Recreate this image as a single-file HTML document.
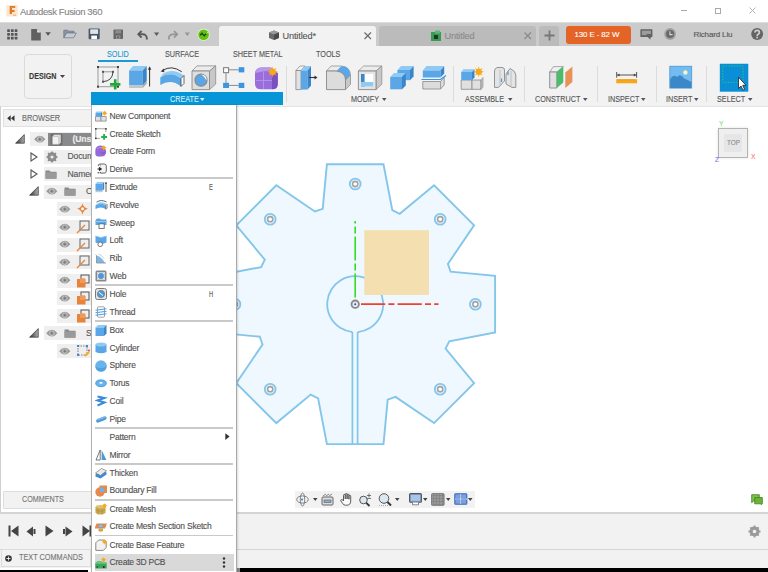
<!DOCTYPE html>
<html><head><meta charset="utf-8">
<style>
*{margin:0;padding:0;box-sizing:border-box}
html,body{width:768px;height:572px;overflow:hidden;background:#fff;font-family:"Liberation Sans",sans-serif;color:#555}
.a{position:absolute;display:block}
.t{position:absolute;white-space:nowrap;line-height:1;-webkit-text-stroke:0.12px currentColor}
</style></head><body>

<svg class="a" style="left:0;top:0" width="768" height="572" viewBox="0 0 768 572"><polygon points="326.9,164.3 383.5,164.3 392.3,210.1 399.7,213.8 434.1,185.3 474.1,225.3 447.9,263.9 450.6,271.7 495.1,275.9 495.1,332.5 449.3,341.3 445.6,348.7 474.1,383.1 434.1,423.1 395.5,396.9 387.7,399.6 383.5,444.1 326.9,444.1 318.1,398.3 310.7,394.6 276.3,423.1 236.3,383.1 262.5,344.5 259.8,336.7 215.3,332.5 215.3,275.9 261.1,267.1 264.8,259.7 236.3,225.3 276.3,185.3 314.9,211.5 322.7,208.8" fill="#eff7ff" stroke="#84c6ea" stroke-width="1.9" stroke-linejoin="miter"/><path d="M 352.6 332.1 A 28 28 0 1 1 357.8 332.1" fill="none" stroke="#84c6ea" stroke-width="1.8"/><path d="M 352.4 332.0 L 352.4 444.2 M 357.6 332.0 L 357.6 444.2" fill="none" stroke="#84c6ea" stroke-width="1.7"/><circle cx="355.2" cy="184.0" r="5.4" fill="#eaf4fb" stroke="#84c6ea" stroke-width="1.8"/><circle cx="355.2" cy="184.0" r="2.6" fill="#fff" stroke="#a4a4a4" stroke-width="1.6"/><circle cx="440.2" cy="219.2" r="5.4" fill="#eaf4fb" stroke="#84c6ea" stroke-width="1.8"/><circle cx="440.2" cy="219.2" r="2.6" fill="#fff" stroke="#a4a4a4" stroke-width="1.6"/><circle cx="475.4" cy="304.2" r="5.4" fill="#eaf4fb" stroke="#84c6ea" stroke-width="1.8"/><circle cx="475.4" cy="304.2" r="2.6" fill="#fff" stroke="#a4a4a4" stroke-width="1.6"/><circle cx="440.2" cy="389.2" r="5.4" fill="#eaf4fb" stroke="#84c6ea" stroke-width="1.8"/><circle cx="440.2" cy="389.2" r="2.6" fill="#fff" stroke="#a4a4a4" stroke-width="1.6"/><circle cx="270.2" cy="389.2" r="5.4" fill="#eaf4fb" stroke="#84c6ea" stroke-width="1.8"/><circle cx="270.2" cy="389.2" r="2.6" fill="#fff" stroke="#a4a4a4" stroke-width="1.6"/><circle cx="235.0" cy="304.2" r="5.4" fill="#eaf4fb" stroke="#84c6ea" stroke-width="1.8"/><circle cx="235.0" cy="304.2" r="2.6" fill="#fff" stroke="#a4a4a4" stroke-width="1.6"/><circle cx="270.2" cy="219.2" r="5.4" fill="#eaf4fb" stroke="#84c6ea" stroke-width="1.8"/><circle cx="270.2" cy="219.2" r="2.6" fill="#fff" stroke="#a4a4a4" stroke-width="1.6"/><rect x="364.3" y="230.2" width="64.7" height="64.8" fill="#f3dfb0"/><path d="M 355.2 297.5 L 355.2 221" stroke="#33dd22" stroke-width="1.6" stroke-dasharray="24 3 7 3"/><path d="M 361 304.2 L 438.5 304.2" stroke="#f04030" stroke-width="1.8" stroke-dasharray="24.2 3.2 6 3.2"/><circle cx="355.2" cy="304.2" r="3.7" fill="#e8e8e8" stroke="#888" stroke-width="1.8"/><circle cx="355.2" cy="304.2" r="1" fill="#3355cc"/></svg>
<div class="a" style="left:0px;top:0px;width:768px;height:23px;background:#fff;"></div>
<svg class="a" style="left:6px;top:5px" width="13" height="13" viewBox="0 0 13 13"><rect x="0.4" y="0" width="11.3" height="11.5" fill="#fce6d0"/><path d="M3.7 1H9.2V3.1H6V4.9H8.6V6.9H6V9.1H3.7z" fill="#e07a22"/><path d="M4.5 2H8V2.6H5.2z" fill="#f0a050"/><rect x="7" y="9.6" width="3" height="1.2" fill="#f4b070"/></svg>
<div class="t" style="left:20.00px;top:6.86px;font-size:9.5px;color:#858585;font-weight:normal;letter-spacing:-0.38px;">Autodesk Fusion 360</div>
<div class="a" style="left:681px;top:9.9px;width:6px;height:1px;background:#aaaaaa;"></div>
<div class="a" style="left:714.5px;top:8px;width:6.5px;height:6px;border:1px solid #aaaaaa"></div>
<svg class="a" style="left:748.5px;top:7.3px" width="7" height="7" viewBox="0 0 7 7"><path d="M0.5 0.5L6.5 6.5M6.5 0.5L0.5 6.5" stroke="#aaaaaa" stroke-width="0.9"/></svg>
<div class="a" style="left:0px;top:23px;width:768px;height:22.5px;background:#cbcbcb;"></div>
<div class="a" style="left:0px;top:22.3px;width:768px;height:1.2px;background:#dcdcdc;"></div>
<svg class="a" style="left:6.9px;top:28.9px" width="11" height="11" viewBox="0 0 11 11"><rect x="0.20" y="0.20" width="2.7" height="2.7" rx="0.5" fill="#555"/><rect x="0.20" y="3.95" width="2.7" height="2.7" rx="0.5" fill="#555"/><rect x="0.20" y="7.70" width="2.7" height="2.7" rx="0.5" fill="#555"/><rect x="3.95" y="0.20" width="2.7" height="2.7" rx="0.5" fill="#555"/><rect x="3.95" y="3.95" width="2.7" height="2.7" rx="0.5" fill="#555"/><rect x="3.95" y="7.70" width="2.7" height="2.7" rx="0.5" fill="#555"/><rect x="7.70" y="0.20" width="2.7" height="2.7" rx="0.5" fill="#555"/><rect x="7.70" y="3.95" width="2.7" height="2.7" rx="0.5" fill="#555"/><rect x="7.70" y="7.70" width="2.7" height="2.7" rx="0.5" fill="#555"/></svg>
<svg class="a" style="left:30px;top:28.5px" width="22" height="12" viewBox="0 0 22 12"><path d="M1.2 0h6l3.6 3.6V11.4H1.2z" fill="#606060"/><path d="M7.2 0v3.6h3.6z" fill="#e8e8e8"/><path d="M15.3 3.3h5.5l-2.75 3.5z" fill="#555"/></svg>
<svg class="a" style="left:62.5px;top:28.8px" width="14" height="10" viewBox="0 0 14 10"><path d="M0.8 1.2h4l1 1h5.2v2H3.5L0.8 8.8z" fill="#8a96a4" stroke="#6a7684" stroke-width="0.7"/><path d="M0.8 8.8l2.7-4.8h9.8l-2.7 4.8z" fill="#c4ccd6" stroke="#6a7684" stroke-width="0.7"/></svg>
<svg class="a" style="left:87.7px;top:28.3px" width="12.3" height="11.8" viewBox="0 0 12.3 11.8"><rect x="0.6" y="0.6" width="11.1" height="10.6" rx="1" fill="#46566a"/><rect x="2.2" y="1.3" width="7.9" height="4.6" fill="#dfe3e8"/><rect x="3.3" y="7.6" width="5.7" height="3.6" fill="#fff"/></svg>
<svg class="a" style="left:113.1px;top:29.3px" width="10.5" height="10.5" viewBox="0 0 10.5 10.5"><path d="M0.5 1.2l0.7-0.7h8.3l0.5 0.5v8.5l-0.5 0.5H0.5z" fill="#676767"/><rect x="2.3" y="1.2" width="5.8" height="3.2" fill="#8c8c8c"/><rect x="3" y="6.5" width="4.3" height="3.2" fill="#9a9a9a"/><rect x="4" y="7.3" width="2.3" height="1.8" fill="#676767"/></svg>
<svg class="a" style="left:136.5px;top:29.5px" width="24" height="10" viewBox="0 0 24 10"><path d="M4.6 1L1.3 4.3L4.6 7.6" fill="none" stroke="#5a5a5a" stroke-width="1.9"/><path d="M2 4.3h3.8a4 4 0 0 1 4 4v1.2" fill="none" stroke="#5a5a5a" stroke-width="1.9"/><path d="M17 2.5h5.2l-2.6 3.5z" fill="#5a5a5a"/></svg>
<svg class="a" style="left:167.5px;top:29.5px" width="24" height="10" viewBox="0 0 24 10"><path d="M6 1L9.3 4.3L6 7.6" fill="none" stroke="#959595" stroke-width="1.7"/><path d="M8.6 4.3h-3.8a4 4 0 0 0 -4 4v1.2" fill="none" stroke="#959595" stroke-width="1.7"/><path d="M16.7 2.5h5.2l-2.6 3.5z" fill="#959595"/></svg>
<svg class="a" style="left:196.5px;top:27.5px" width="14" height="14" viewBox="0 0 14 14"><circle cx="6.6" cy="6.7" r="6.2" fill="#dff0d0"/><circle cx="6.6" cy="6.7" r="5.3" fill="#62c010"/><path d="M3.2 7.2l1.8-2 2.2 2.6 2.2-2.2" fill="none" stroke="#1e3a12" stroke-width="1.3"/><path d="M9.4 5.6l2-2" stroke="#b8e890" stroke-width="0.9"/></svg>
<div class="a" style="left:219px;top:25.5px;width:157px;height:20px;background:#f2f2f2;border-radius:3px 3px 0 0"></div>
<svg class="a" style="left:268px;top:28.5px" width="12" height="12" viewBox="0 0 12 12"><path d="M1 3.5L6 1.5L11 3.5V9L6 11L1 9z" fill="#6a6a6a"/><path d="M1 3.5L6 5.5L11 3.5L6 1.5z" fill="#9a9a9a"/><path d="M6 5.5V11L11 9V3.5z" fill="#4a4a4a"/></svg>
<div class="t" style="left:282.50px;top:31.51px;font-size:9.2px;color:#555;font-weight:normal;letter-spacing:-0.15px;">Untitled*</div>
<svg class="a" style="left:364px;top:32px" width="8" height="8" viewBox="0 0 8 8"><path d="M0.5 0.5L7 7M7 0.5L0.5 7" stroke="#666" stroke-width="1.1"/></svg>
<div class="a" style="left:379px;top:25.5px;width:157px;height:20px;background:#bbbbbb;border-radius:3px 3px 0 0"></div>
<svg class="a" style="left:429.5px;top:29.5px" width="12" height="12" viewBox="0 0 12 12"><rect x="1" y="2" width="10" height="9" fill="#3a9a55"/><rect x="4" y="5" width="4" height="4" fill="#1a3a20"/><rect x="5" y="0.5" width="5" height="3" fill="#5aba75"/></svg>
<div class="t" style="left:444.50px;top:31.51px;font-size:9.2px;color:#8a8a8a;font-weight:normal;letter-spacing:-0.15px;">Untitled</div>
<svg class="a" style="left:524px;top:32px" width="8" height="8" viewBox="0 0 8 8"><path d="M0.5 0.5L7 7M7 0.5L0.5 7" stroke="#888" stroke-width="1.1"/></svg>
<div class="a" style="left:539px;top:25.5px;width:20px;height:20px;background:#bbbbbb;border-radius:3px 3px 0 0"></div>
<svg class="a" style="left:543.5px;top:30px" width="11" height="11" viewBox="0 0 11 11"><path d="M5.5 0.5V10.5M0.5 5.5H10.5" stroke="#777" stroke-width="1.8"/></svg>
<div class="a" style="left:566px;top:25.5px;width:65px;height:18.2px;background:#e46327;border-radius:3px"></div>
<div class="t" style="left:574.50px;top:31.14px;font-size:7.9px;color:#fff;font-weight:normal;letter-spacing:-0.1px;">130 E - 82 W</div>
<svg class="a" style="left:639.5px;top:29px" width="13" height="11" viewBox="0 0 13 11"><rect x="0.4" y="0.2" width="12" height="7.8" rx="0.6" fill="#606060"/><rect x="1.8" y="1.6" width="9.2" height="4.6" fill="#9c9c9c"/><rect x="6.5" y="5" width="4.5" height="1.2" fill="#606060"/><path d="M7.5 7.8H11L10.2 10.5z" fill="#606060"/></svg>
<svg class="a" style="left:664px;top:28.1px" width="12.5" height="12.5" viewBox="0 0 12.5 12.5"><circle cx="6.1" cy="6" r="5.9" fill="#a4a4a4"/><circle cx="6.1" cy="6" r="4.6" fill="#8a8a8a"/><circle cx="6.1" cy="6" r="3.8" fill="#676767"/><path d="M5.9 3.3V6.6H8.6" fill="none" stroke="#d8d8d8" stroke-width="1.1"/></svg>
<div class="t" style="left:693.50px;top:31.09px;font-size:8.0px;color:#555;font-weight:normal;letter-spacing:-0.15px;">Richard Liu</div>
<svg class="a" style="left:751px;top:28px" width="12.5" height="12.5" viewBox="0 0 12.5 12.5"><circle cx="6.15" cy="6" r="5.95" fill="#646464"/><path d="M4 4.6Q4 2.3 6.2 2.3Q8.4 2.3 8.4 4.3Q8.4 5.6 7.2 6.2Q6.2 6.7 6.2 7.9" fill="none" stroke="#cfcfcf" stroke-width="1.7"/><rect x="5.35" y="8.7" width="1.7" height="1.6" fill="#cfcfcf"/></svg>
<div class="a" style="left:0px;top:45.5px;width:768px;height:60.5px;background:#f2f2f2;"></div>
<div class="a" style="left:0px;top:105.5px;width:768px;height:1px;background:#e4e4e4;"></div>
<div class="a" style="left:23.5px;top:54px;width:48px;height:44.5px;border:1px solid #dadada;border-radius:4px;background:#f2f2f2"></div>
<div class="t" style="left:29.30px;top:72.45px;font-size:8.3px;color:#3a3a3a;font-weight:bold;letter-spacing:0px;transform:scaleX(0.86);transform-origin:0 0;">DESIGN</div>
<svg class="a" style="left:60px;top:75px" width="6" height="4" viewBox="0 0 6 4"><path d="M0 0h5l-2.5 3z" fill="#444"/></svg>
<div class="t" style="left:107.00px;top:50.25px;font-size:8.5px;color:#1a9ad8;font-weight:normal;letter-spacing:0px;transform:scaleX(0.85);transform-origin:0 0;">SOLID</div>
<div class="a" style="left:98px;top:60.2px;width:40px;height:2px;background:#1a9ad8;"></div>
<div class="t" style="left:165.00px;top:50.25px;font-size:8.5px;color:#555;font-weight:normal;letter-spacing:0px;transform:scaleX(0.85);transform-origin:0 0;">SURFACE</div>
<div class="t" style="left:233.30px;top:50.25px;font-size:8.5px;color:#555;font-weight:normal;letter-spacing:0px;transform:scaleX(0.85);transform-origin:0 0;">SHEET METAL</div>
<div class="t" style="left:316.00px;top:50.25px;font-size:8.5px;color:#555;font-weight:normal;letter-spacing:0px;transform:scaleX(0.85);transform-origin:0 0;">TOOLS</div>
<div class="a" style="left:286px;top:66px;width:1px;height:36px;background:#dcdcdc;"></div>
<div class="a" style="left:452.5px;top:66px;width:1px;height:36px;background:#dcdcdc;"></div>
<div class="a" style="left:524px;top:66px;width:1px;height:36px;background:#dcdcdc;"></div>
<div class="a" style="left:597px;top:66px;width:1px;height:36px;background:#dcdcdc;"></div>
<div class="a" style="left:656px;top:66px;width:1px;height:36px;background:#dcdcdc;"></div>
<div class="a" style="left:706.2px;top:66px;width:1px;height:36px;background:#dcdcdc;"></div>
<div class="a" style="left:91px;top:92.4px;width:191.9px;height:12.6px;background:#0696d7;"></div>
<div class="t" style="left:169.50px;top:95.05px;font-size:8.5px;color:#d6effa;font-weight:normal;letter-spacing:0px;transform:scaleX(0.85);transform-origin:0 0;">CREATE</div>
<svg class="a" style="left:200px;top:98px" width="5" height="3.5" viewBox="0 0 5 3.5"><path d="M0 0h4.5l-2.25 3z" fill="#e6f6fd"/></svg>
<div class="t" style="left:351.00px;top:95.05px;font-size:8.5px;color:#555;font-weight:normal;letter-spacing:0px;transform:scaleX(0.85);transform-origin:0 0;">MODIFY</div>
<svg class="a" style="left:382px;top:98px" width="5" height="3.5" viewBox="0 0 5 3.5"><path d="M0 0h4.5l-2.25 3z" fill="#555"/></svg>
<div class="t" style="left:465.00px;top:95.05px;font-size:8.5px;color:#555;font-weight:normal;letter-spacing:0px;transform:scaleX(0.85);transform-origin:0 0;">ASSEMBLE</div>
<svg class="a" style="left:508px;top:98px" width="5" height="3.5" viewBox="0 0 5 3.5"><path d="M0 0h4.5l-2.25 3z" fill="#555"/></svg>
<div class="t" style="left:535.00px;top:95.05px;font-size:8.5px;color:#555;font-weight:normal;letter-spacing:0px;transform:scaleX(0.85);transform-origin:0 0;">CONSTRUCT</div>
<svg class="a" style="left:582.5px;top:98px" width="5" height="3.5" viewBox="0 0 5 3.5"><path d="M0 0h4.5l-2.25 3z" fill="#555"/></svg>
<div class="t" style="left:607.50px;top:95.05px;font-size:8.5px;color:#555;font-weight:normal;letter-spacing:0px;transform:scaleX(0.85);transform-origin:0 0;">INSPECT</div>
<svg class="a" style="left:641px;top:98px" width="5" height="3.5" viewBox="0 0 5 3.5"><path d="M0 0h4.5l-2.25 3z" fill="#555"/></svg>
<div class="t" style="left:665.50px;top:95.05px;font-size:8.5px;color:#555;font-weight:normal;letter-spacing:0px;transform:scaleX(0.85);transform-origin:0 0;">INSERT</div>
<svg class="a" style="left:694px;top:98px" width="5" height="3.5" viewBox="0 0 5 3.5"><path d="M0 0h4.5l-2.25 3z" fill="#555"/></svg>
<div class="t" style="left:716.50px;top:95.05px;font-size:8.5px;color:#555;font-weight:normal;letter-spacing:0px;transform:scaleX(0.85);transform-origin:0 0;">SELECT</div>
<svg class="a" style="left:748px;top:98px" width="5" height="3.5" viewBox="0 0 5 3.5"><path d="M0 0h4.5l-2.25 3z" fill="#555"/></svg>
<svg class="a" style="left:95px;top:64px" width="28" height="28" viewBox="95 64 28 28"><path d="M98 67H118V86.7H98z" fill="none" stroke="#9a9a9a" stroke-width="1"/><rect x="97" y="66" width="2" height="2" fill="#444"/><rect x="117" y="66" width="2" height="2" fill="#444"/><rect x="97" y="85.7" width="2" height="2" fill="#444"/><rect x="117" y="85.7" width="2" height="2" fill="#444"/><path d="M103 71.8H113M103 71.8V81.7" stroke="#8a8a8a" stroke-width="0.9"/><path d="M113 71.8Q112.5 81 103 81.7" fill="none" stroke="#444" stroke-width="1"/><rect x="102" y="70.8" width="2" height="2" fill="#555"/><rect x="112" y="70.8" width="2" height="2" fill="#555"/><rect x="102" y="80.7" width="2" height="2" fill="#555"/><path d="M110 84.4H120.4M115.2 79.2V89.6" stroke="#22a83a" stroke-width="2.6"/></svg>
<svg class="a" style="left:127px;top:64px" width="26" height="26" viewBox="127 64 26 26"><path d="M129.1 70.5L133 65.9H146.7L142.8 70.5z" fill="#8ecaf4"/><path d="M129.1 70.5H142.8V85.4H129.1z" fill="#5aa6e6"/><path d="M142.8 70.5L146.7 65.9V81L142.8 85.4z" fill="#3a86c8"/><path d="M129.1 85.4H142.8V88H129.1z" fill="#c4c4c4"/><path d="M142.8 85.4L146.7 81V83.6L142.8 88z" fill="#a8a8a8"/><path d="M149.6 86.5V67.5" stroke="#333" stroke-width="1"/><path d="M147.9 69.8L149.6 66.3L151.3 69.8z" fill="#333"/></svg>
<svg class="a" style="left:158px;top:64px" width="28" height="26" viewBox="158 64 28 26"><path d="M162.5 70.6Q171.5 64.5 181.8 71.8" fill="none" stroke="#3a3a3a" stroke-width="1"/><path d="M160.6 71.6L163.8 68.6L164.4 72.2z" fill="#3a3a3a"/><path d="M160.3 77.5Q171 70.5 181 78.5L184 75.5Q172 67.5 163 73.8z" fill="#8ecaf4"/><path d="M160.3 77.5Q171 70.5 181 78.5V86.5Q171 78.5 160.3 85z" fill="#5aa6e6"/><path d="M181 78.5L184 75.5V83.5L181 86.5z" fill="#fff" stroke="#444" stroke-width="0.8"/></svg>
<svg class="a" style="left:190px;top:64px" width="28" height="27" viewBox="190 64 28 27"><path d="M192 71L197 65.9H215.7L209.5 71z" fill="#ececec" stroke="#8a8a8a" stroke-width="0.8"/><path d="M209.5 71L215.7 65.9V84L209.5 89.6z" fill="#c8c8c8" stroke="#8a8a8a" stroke-width="0.8"/><path d="M192 71H209.5V89.6H192z" fill="#dedede" stroke="#8a8a8a" stroke-width="0.9"/><circle cx="201" cy="80.2" r="6" fill="#5aa6e6" stroke="#8a8a8a" stroke-width="1.2"/><path d="M201.5 74.6Q206.8 75 206.6 80.6Q204.5 76.8 201.5 74.6z" fill="#fff"/></svg>
<svg class="a" style="left:221px;top:65px" width="26" height="25" viewBox="221 65 26 25"><path d="M229 69.8H238.7M226 72.4V82.8M229 85.4H238.7" stroke="#8a8a8a" stroke-width="1"/><rect x="223.6" y="67.7" width="5" height="5" fill="#fff" stroke="#777" stroke-width="1"/><rect x="238.7" y="67.2" width="5.6" height="5.2" fill="#3a96e0"/><rect x="223.1" y="82.8" width="5.9" height="5.2" fill="#3a96e0"/><rect x="238.7" y="82.8" width="5.6" height="5.2" fill="#3a96e0"/></svg>
<svg class="a" style="left:253px;top:63px" width="28" height="28" viewBox="253 63 28 28"><path d="M255 74Q255 68 261 67.5H271L277.8 73V84Q277.8 89.3 272 89.3H261Q255 89.3 255 84z" fill="#9b6ddb"/><path d="M255.5 73Q256 68 261 67.5H271L276 70Q266 70.5 255.5 73z" fill="#b898ec"/><path d="M272 75L277.8 73V84Q277.8 89.3 272 89.3z" fill="#7a50c0"/><path d="M256 80.5H272M263.5 72V89" stroke="#b494ea" stroke-width="0.9"/><circle cx="272.6" cy="71.8" r="3.08" fill="#f8a818"/><path d="M278.20 71.80 L274.67 72.66 L274.67 70.94z" fill="#f8a818"/><path d="M276.56 75.76 L273.46 73.87 L274.67 72.66z" fill="#f8a818"/><path d="M272.60 77.40 L271.74 73.87 L273.46 73.87z" fill="#f8a818"/><path d="M268.64 75.76 L270.53 72.66 L271.74 73.87z" fill="#f8a818"/><path d="M267.00 71.80 L270.53 70.94 L270.53 72.66z" fill="#f8a818"/><path d="M268.64 67.84 L271.74 69.73 L270.53 70.94z" fill="#f8a818"/><path d="M272.60 66.20 L273.46 69.73 L271.74 69.73z" fill="#f8a818"/><path d="M276.56 67.84 L274.67 70.94 L273.46 69.73z" fill="#f8a818"/></svg>
<svg class="a" style="left:294px;top:64px" width="26" height="27" viewBox="294 64 26 27"><path d="M295.9 70.5L299.9 66H305L301 70.5z" fill="#f0f0f0" stroke="#888" stroke-width="0.7"/><path d="M295.9 70.5H301V89.6H295.9z" fill="#e2e2e2" stroke="#888" stroke-width="0.8"/><path d="M301 70.5L305 66H311L307.6 70.5z" fill="#8ecaf4"/><path d="M301 70.5H307.6V89.6H301z" fill="#5aa6e6"/><path d="M307.6 70.5L311 66V85.5L307.6 89.6z" fill="#3a86c8"/><path d="M309 77.5H315.5" stroke="#333" stroke-width="1.1"/><path d="M314.5 75.6L317.5 77.5L314.5 79.4z" fill="#333"/></svg>
<svg class="a" style="left:325px;top:64px" width="28" height="27" viewBox="325 64 28 27"><path d="M326.5 71L331 66H341Q350 66.5 350.5 75L345.5 80Q345 71.5 336 71z" fill="#ececec" stroke="#888" stroke-width="0.7"/><path d="M336.5 71L341.5 66Q350 66.5 350.5 75L345.5 80Q345 72 336.5 71z" fill="#5aa6e6"/><path d="M345.5 80L350.5 75V84.5L345.5 89.6z" fill="#c8c8c8" stroke="#888" stroke-width="0.7"/><path d="M326.5 71H336Q345.5 72 345.5 80V89.6H326.5z" fill="#dcdcdc" stroke="#888" stroke-width="0.9"/></svg>
<svg class="a" style="left:357px;top:64px" width="27" height="27" viewBox="357 64 27 27"><path d="M358.4 71L363.5 66H381.8L376 71z" fill="#ececec" stroke="#888" stroke-width="0.7"/><path d="M376 71L381.8 66V84.3L376 89.6z" fill="#c8c8c8" stroke="#888" stroke-width="0.7"/><path d="M358.4 71H376V89.6H358.4z" fill="#e4e4e4" stroke="#888" stroke-width="0.9"/><rect x="361" y="74" width="12.2" height="12.5" fill="#fff"/><rect x="361" y="74" width="3.6" height="12.5" fill="#3a88cc"/><rect x="361" y="82" width="12.2" height="4.5" fill="#8ecaf4"/></svg>
<svg class="a" style="left:389px;top:64px" width="27" height="27" viewBox="389 64 27 27"><path d="M397.4 70L401 66H413.6L410 70z" fill="#8ecaf4"/><path d="M397.4 70H410V80.2H397.4z" fill="#5aa6e6"/><path d="M410 70L413.6 66V76.5L410 80.2z" fill="#3a86c8"/><path d="M390.2 77L394 73H405.8L402 77z" fill="#8ecaf4"/><path d="M390.2 77H402V89.3H390.2z" fill="#5aa6e6"/><path d="M402 77L405.8 73V85.5L402 89.3z" fill="#3a86c8"/></svg>
<svg class="a" style="left:421px;top:64px" width="27" height="27" viewBox="421 64 27 27"><path d="M422.8 70.5L426.5 66H444.2L440.5 70.5z" fill="#8ecaf4"/><path d="M422.8 70.5H440.5V77.5H422.8z" fill="#5aa6e6"/><path d="M440.5 70.5L444.2 66V73.5L440.5 77.5z" fill="#3a86c8"/><path d="M422.8 81.5H440.5L444.2 77.5V85L440.5 89H422.8z" fill="#dcdcdc" stroke="#888" stroke-width="0.8"/><path d="M440.5 81.5V89" stroke="#888" stroke-width="0.7"/><path d="M421.5 79.5H440.5L446 75.5" fill="none" stroke="#3a96e0" stroke-width="1.2"/></svg>
<svg class="a" style="left:459px;top:63px" width="28" height="28" viewBox="459 63 28 28"><path d="M461.2 80H472V89.3H461.2z" fill="#e0e0e0" stroke="#888" stroke-width="0.8"/><path d="M472 80H481V89.3H472z" fill="#e0e0e0" stroke="#888" stroke-width="0.8"/><path d="M481 80L483 77.5V87L481 89.3z" fill="#c4c4c4" stroke="#888" stroke-width="0.6"/><path d="M461.2 72L463.5 69.2H474.5L472 72z" fill="#8ecaf4"/><path d="M461.2 72H472V80H461.2z" fill="#5aa6e6"/><path d="M472 72L474.5 69.2V77.5L472 80z" fill="#3a86c8"/><circle cx="478.75" cy="71.8" r="3.08" fill="#f8a818"/><path d="M484.35 71.80 L480.82 72.66 L480.82 70.94z" fill="#f8a818"/><path d="M482.71 75.76 L479.61 73.87 L480.82 72.66z" fill="#f8a818"/><path d="M478.75 77.40 L477.89 73.87 L479.61 73.87z" fill="#f8a818"/><path d="M474.79 75.76 L476.68 72.66 L477.89 73.87z" fill="#f8a818"/><path d="M473.15 71.80 L476.68 70.94 L476.68 72.66z" fill="#f8a818"/><path d="M474.79 67.84 L477.89 69.73 L476.68 70.94z" fill="#f8a818"/><path d="M478.75 66.20 L479.61 69.73 L477.89 69.73z" fill="#f8a818"/><path d="M482.71 67.84 L480.82 70.94 L479.61 69.73z" fill="#f8a818"/></svg>
<svg class="a" style="left:492px;top:64px" width="26" height="26" viewBox="492 64 26 26"><path d="M494.5 72Q494.5 67.5 498 67.5H502Q504.5 67.5 504.5 70V81L498.5 87.4H494.5z" fill="#e4e4e4" stroke="#8a8a8a" stroke-width="0.9"/><path d="M500 70V85" stroke="#aaa" stroke-width="0.6"/><path d="M506 74L510 68.5Q515.8 71 515.8 75V87.4H512L506 84z" fill="#e4e4e4" stroke="#8a8a8a" stroke-width="0.9"/><path d="M511 71V86" stroke="#aaa" stroke-width="0.6"/><path d="M501.5 78.5V82" stroke="#3a9ae8" stroke-width="1.2"/><path d="M508 71.5V75" stroke="#3a9ae8" stroke-width="1.2"/></svg>
<svg class="a" style="left:548px;top:64px" width="27" height="26" viewBox="548 64 27 26"><path d="M549.7 72L553.5 66.6H563.3L556.8 72z" fill="#f0f0f0" stroke="#888" stroke-width="0.7"/><path d="M549.7 72H556.8V88H549.7z" fill="#e0e0e0" stroke="#888" stroke-width="0.9"/><path d="M556.8 72L563.3 66.6V82.5L556.8 88z" fill="#4cbb6c"/><path d="M565.3 72.5L572.4 66.6V82L565.3 88z" fill="#e8925a"/></svg>
<svg class="a" style="left:614px;top:70px" width="25" height="15" viewBox="614 70 25 15"><path d="M616.7 72V77.7M636.6 72V77.7M617 75H636.3" stroke="#444" stroke-width="0.9"/><path d="M617.2 75L619.5 73.6V76.4z M636.1 75L633.8 73.6V76.4z" fill="#444"/><rect x="616.25" y="79.2" width="20.85" height="4.1" fill="#f7a81a"/><path d="M618 79.2v1.2M620 79.2v0.8M622 79.2v1.2M624 79.2v0.8M626 79.2v1.2M628 79.2v0.8M630 79.2v1.2M632 79.2v0.8M634 79.2v1.2" stroke="#b87a10" stroke-width="0.5"/></svg>
<svg class="a" style="left:669px;top:65px" width="24" height="25" viewBox="669 65 24 25"><rect x="669.8" y="66.25" width="21.9" height="21.85" fill="#72bcf0" stroke="#4a96d6" stroke-width="0.8"/><path d="M670.2 88V79Q673.5 73.5 677 77Q680.5 73 684 78.5Q687.5 79.5 691.3 82V88z" fill="#3a88c8"/><circle cx="685.4" cy="72.5" r="2.2" fill="#f8f4c0"/></svg>
<svg class="a" style="left:719px;top:63px" width="31" height="30" viewBox="719 63 31 30"><rect x="719.8" y="63.75" width="28.5" height="27.95" fill="#0a8fd6"/><rect x="722.8" y="66" width="20.3" height="16.3" fill="none" stroke="#3ac860" stroke-width="0.9" stroke-dasharray="1.4 1.4"/><path d="M738.5 77.2V88.5L741 86L743 90.2L744.6 89.4L742.7 85.3H746z" fill="#fff" stroke="#222" stroke-width="0.8"/></svg>
<div class="a" style="left:718px;top:128px;width:30px;height:30px;background:#efefef;border:1px solid #b4b4b4;box-shadow:0 0 3px rgba(0,0,0,0.12)"></div>
<div class="a" style="left:724px;top:134px;width:18px;height:18px;background:#e6e6e8;"></div>
<div class="t" style="left:726.60px;top:139.09px;font-size:8px;color:#8a8a8a;font-weight:normal;letter-spacing:0px;transform:scaleX(0.8);transform-origin:0 0;">TOP</div>
<div class="t" style="left:718.60px;top:119.84px;font-size:7.5px;color:#77dd77;font-weight:normal;letter-spacing:0px;transform:scaleX(0.9);transform-origin:0 0;">Y</div>
<div class="t" style="left:751.00px;top:152.84px;font-size:7.5px;color:#ff7777;font-weight:normal;letter-spacing:0px;transform:scaleX(0.9);transform-origin:0 0;">X</div>
<div class="t" style="left:714.80px;top:156.34px;font-size:7.5px;color:#7777ee;font-weight:normal;letter-spacing:0px;transform:scaleX(0.9);transform-origin:0 0;">Z</div>
<div class="a" style="left:294.6px;top:490.9px;width:180.4px;height:17.5px;background:#f2f2f2;"></div>
<svg class="a" style="left:296px;top:492px" width="13" height="15" viewBox="0 0 13 15"><ellipse cx="6.5" cy="7.5" rx="5.8" ry="3.6" fill="none" stroke="#777" stroke-width="0.9"/><ellipse cx="6.5" cy="7.5" rx="2.2" ry="6.5" fill="none" stroke="#777" stroke-width="0.9"/><circle cx="6" cy="7.5" r="1.1" fill="#2a8ae8"/></svg>
<svg class="a" style="left:312.5px;top:498.3px" width="5" height="3.5" viewBox="0 0 5 3.5"><path d="M0 0h4.5l-2.25 3z" fill="#444"/></svg>
<svg class="a" style="left:320.5px;top:493px" width="13" height="13" viewBox="0 0 13 13"><rect x="1" y="4" width="11" height="8" rx="1" fill="#ddd" stroke="#666" stroke-width="1"/><rect x="3" y="7" width="7" height="2.5" fill="#8ab0d8" stroke="#555" stroke-width="0.6"/><path d="M2 3l3-2M5 3l3-2M8 3l3-2" stroke="#666" stroke-width="0.8"/></svg>
<svg class="a" style="left:339.8px;top:493.3px" width="13" height="13" viewBox="0 0 13 13"><path d="M3.5 7.2V2.4Q3.5 1.4 4.4 1.4Q5.3 1.4 5.3 2.4V6V1.4Q5.3 0.5 6.2 0.5Q7.1 0.5 7.1 1.4V6V1.9Q7.1 1 8 1Q8.9 1 8.9 1.9V6.2V3.2Q8.9 2.3 9.8 2.3Q10.7 2.3 10.7 3.2V8Q10.7 12.2 6.8 12.2H5.5Q3.8 12.2 2.8 10.7L0.9 8Q0.4 7 1.3 6.6Q2.1 6.3 2.8 7.1L3.5 8z" fill="#fafafa" stroke="#4a4a4a" stroke-width="0.9"/><path d="M5.3 6V3M7.1 6V3M8.9 6.2V4" stroke="#888" stroke-width="0.5"/></svg>
<svg class="a" style="left:357.5px;top:492px" width="15" height="15" viewBox="0 0 15 15"><circle cx="5.5" cy="8" r="3.8" fill="#dbe8f0" stroke="#555" stroke-width="1"/><path d="M8.3 10.8l3.2 3.2" stroke="#333" stroke-width="1.8"/><path d="M11 1.5v4M9 3.5h4M9 6.5h4" stroke="#555" stroke-width="0.8"/></svg>
<svg class="a" style="left:377.5px;top:492px" width="15" height="15" viewBox="0 0 15 15"><circle cx="6" cy="6.5" r="4.8" fill="#dbe8f0" stroke="#555" stroke-width="1"/><path d="M9.5 10l3.5 3.5" stroke="#333" stroke-width="2"/><path d="M1 13.5h9" stroke="#777" stroke-width="0.6" stroke-dasharray="1 1"/></svg>
<svg class="a" style="left:394.5px;top:498.3px" width="5" height="3.5" viewBox="0 0 5 3.5"><path d="M0 0h4.5l-2.25 3z" fill="#444"/></svg>
<svg class="a" style="left:408.5px;top:493.3px" width="13" height="13" viewBox="0 0 13 13"><rect x="0.6" y="0.6" width="11.8" height="8.6" rx="1" fill="#7fa8d8" stroke="#555" stroke-width="1.1"/><rect x="2" y="2" width="9" height="5.8" fill="#a8c4e8"/><path d="M3.5 9.5V11.8H9.5V9.5" fill="#fff" stroke="#666" stroke-width="0.8"/></svg>
<svg class="a" style="left:423px;top:498.3px" width="5" height="3.5" viewBox="0 0 5 3.5"><path d="M0 0h4.5l-2.25 3z" fill="#444"/></svg>
<svg class="a" style="left:430.5px;top:492.5px" width="14" height="14" viewBox="0 0 14 14"><rect x="0.5" y="0.5" width="12.5" height="12" rx="1" fill="#bdbdbd" stroke="#777" stroke-width="0.8"/><path d="M1.0 1v11" stroke="#6a6a6a" stroke-width="0.5"/><path d="M2.5 1v11" stroke="#6a6a6a" stroke-width="0.5"/><path d="M4.0 1v11" stroke="#6a6a6a" stroke-width="0.5"/><path d="M5.5 1v11" stroke="#6a6a6a" stroke-width="0.5"/><path d="M7.0 1v11" stroke="#6a6a6a" stroke-width="0.5"/><path d="M8.5 1v11" stroke="#6a6a6a" stroke-width="0.5"/><path d="M10.0 1v11" stroke="#6a6a6a" stroke-width="0.5"/><path d="M11.5 1v11" stroke="#6a6a6a" stroke-width="0.5"/><path d="M13.0 1v11" stroke="#6a6a6a" stroke-width="0.5"/><path d="M1 1.0h12" stroke="#6a6a6a" stroke-width="0.5"/><path d="M1 2.5h12" stroke="#6a6a6a" stroke-width="0.5"/><path d="M1 4.0h12" stroke="#6a6a6a" stroke-width="0.5"/><path d="M1 5.5h12" stroke="#6a6a6a" stroke-width="0.5"/><path d="M1 7.0h12" stroke="#6a6a6a" stroke-width="0.5"/><path d="M1 8.5h12" stroke="#6a6a6a" stroke-width="0.5"/><path d="M1 10.0h12" stroke="#6a6a6a" stroke-width="0.5"/><path d="M1 11.5h12" stroke="#6a6a6a" stroke-width="0.5"/></svg>
<svg class="a" style="left:446px;top:498.3px" width="5" height="3.5" viewBox="0 0 5 3.5"><path d="M0 0h4.5l-2.25 3z" fill="#444"/></svg>
<svg class="a" style="left:453.5px;top:493px" width="14" height="13" viewBox="0 0 14 13"><rect x="0.5" y="0.5" width="12.5" height="11" rx="1" fill="#4a78c8" stroke="#5a7ab8" stroke-width="0.8"/><path d="M6.75 1v10M1 6h12" stroke="#dde6f6" stroke-width="1"/><rect x="1.5" y="1.5" width="4.6" height="4" fill="#7aa0e0"/><rect x="7.4" y="1.5" width="4.6" height="4" fill="#7aa0e0"/><rect x="1.5" y="6.6" width="4.6" height="4" fill="#7aa0e0"/><rect x="7.4" y="6.6" width="4.6" height="4" fill="#7aa0e0"/></svg>
<svg class="a" style="left:468px;top:498.3px" width="5" height="3.5" viewBox="0 0 5 3.5"><path d="M0 0h4.5l-2.25 3z" fill="#444"/></svg>
<svg class="a" style="left:750.5px;top:494.3px" width="12" height="11" viewBox="0 0 12 11"><path d="M0.7 0.7h7.6v6.2H2.7l-2 1.8z" fill="#7cc444" stroke="#4a7a2a" stroke-width="0.8"/><path d="M3.7 3.5h7.6v6.3l-1 0.9v-0.9H3.7z" fill="#6ab434" stroke="#4a7a2a" stroke-width="0.8"/></svg>
<div class="a" style="left:0px;top:106px;width:1px;height:406px;background:#d0d0d0;"></div>
<div class="a" style="left:3.3px;top:109px;width:100px;height:18.4px;background:#f2f2f2;border:1px solid #e0e0e0"></div>
<svg class="a" style="left:7px;top:114.6px" width="8" height="7" viewBox="0 0 8 7"><path d="M3.7 0.3L0.2 3.3l3.5 3zM7.5 0.3L4 3.3l3.5 3z" fill="#333"/></svg>
<div class="t" style="left:21.60px;top:113.85px;font-size:8.7px;color:#6a6a6a;font-weight:normal;letter-spacing:0px;transform:scaleX(0.85);transform-origin:0 0;">BROWSER</div>
<div class="a" style="left:30px;top:131.8px;width:61px;height:14.4px;background:#efefef;"></div>
<svg class="a" style="left:15px;top:134px" width="10" height="10" viewBox="0 0 10 10"><defs><linearGradient id="tg" x1="0" y1="0" x2="1" y2="0"><stop offset="0" stop-color="#333"/><stop offset="1" stop-color="#b0b0b0"/></linearGradient></defs><path d="M9.3 0.6V9.2H0.6z" fill="url(#tg)" stroke="#333" stroke-width="0.7"/></svg>
<svg class="a" style="left:33.6px;top:134.8px" width="12" height="9" viewBox="0 0 12 9"><path d="M0.2 4.2Q5.8-2.6 11.4 4.2Q5.8 11 0.2 4.2z" fill="#989898"/><circle cx="5.8" cy="4.2" r="2.4" fill="none" stroke="#c4c4c4" stroke-width="1"/><circle cx="5.8" cy="4.2" r="0.9" fill="#777"/></svg>
<div class="a" style="left:48px;top:132.5px;width:43px;height:13px;background:#8a8a8a;"></div>
<svg class="a" style="left:49.5px;top:132.5px" width="13" height="13" viewBox="0 0 13 13"><rect x="0.5" y="0.5" width="12" height="12" rx="1.5" fill="#6f6f6f"/><path d="M2.3 3.6L4.2 1.8H10.6V9.6L8.7 11.4H2.3z" fill="#f2f2f2" stroke="#999" stroke-width="0.6"/><path d="M2.3 3.6H8.7V11.4M8.7 3.6L10.6 1.8" fill="none" stroke="#aaa" stroke-width="0.6"/><path d="M8.7 3.6L10.6 1.8V9.6L8.7 11.4z" fill="#d4d4d4"/></svg>
<div class="t" style="left:72.50px;top:134.80px;font-size:8.6px;color:#eeeeee;font-weight:bold;letter-spacing:-0.1px;">(Uns</div>
<div class="a" style="left:43.5px;top:149.5px;width:47.5px;height:14.4px;background:#efefef;"></div>
<svg class="a" style="left:30px;top:151.5px" width="8" height="10" viewBox="0 0 8 10"><path d="M1 1l6 4-6 4z" fill="none" stroke="#555" stroke-width="1.1"/></svg>
<svg class="a" style="left:45.5px;top:150.5px" width="12" height="12" viewBox="0 0 12 12"><circle cx="6" cy="6" r="3.6" fill="none" stroke="#8a8a8a" stroke-width="2.2"/><path d="M6 0.5v11M0.5 6h11M2 2l8 8M10 2l-8 8" stroke="#8a8a8a" stroke-width="1.6"/><circle cx="6" cy="6" r="1.6" fill="#ececec"/></svg>
<div class="t" style="left:67.50px;top:152.30px;font-size:8.6px;color:#555;font-weight:normal;letter-spacing:-0.15px;">Docum</div>
<div class="a" style="left:43.5px;top:167px;width:47.5px;height:14.4px;background:#efefef;"></div>
<svg class="a" style="left:30px;top:169px" width="8" height="10" viewBox="0 0 8 10"><path d="M1 1l6 4-6 4z" fill="none" stroke="#555" stroke-width="1.1"/></svg>
<svg class="a" style="left:45px;top:169px" width="12" height="10" viewBox="0 0 12 10"><path d="M0.5 1.5h4l1 1.2h6v7H0.5z" fill="#8a8a8a"/><path d="M0.5 3.5h11v6H0.5z" fill="#9a9a9a"/></svg>
<div class="t" style="left:67.50px;top:169.80px;font-size:8.6px;color:#555;font-weight:normal;letter-spacing:-0.15px;">Named</div>
<div class="a" style="left:43.5px;top:184.5px;width:47.5px;height:14.4px;background:#efefef;"></div>
<svg class="a" style="left:28.5px;top:186.4px" width="10" height="10" viewBox="0 0 10 10"><defs><linearGradient id="tg" x1="0" y1="0" x2="1" y2="0"><stop offset="0" stop-color="#333"/><stop offset="1" stop-color="#b0b0b0"/></linearGradient></defs><path d="M9.3 0.6V9.2H0.6z" fill="url(#tg)" stroke="#333" stroke-width="0.7"/></svg>
<svg class="a" style="left:46.1px;top:187.20000000000002px" width="12" height="9" viewBox="0 0 12 9"><path d="M0.2 4.2Q5.8-2.6 11.4 4.2Q5.8 11 0.2 4.2z" fill="#989898"/><circle cx="5.8" cy="4.2" r="2.4" fill="none" stroke="#c4c4c4" stroke-width="1"/><circle cx="5.8" cy="4.2" r="0.9" fill="#777"/></svg>
<svg class="a" style="left:64px;top:186.4px" width="12" height="10" viewBox="0 0 12 10"><path d="M0.5 1.5h4l1 1.2h6v7H0.5z" fill="#8a8a8a"/><path d="M0.5 3.5h11v6H0.5z" fill="#9a9a9a"/></svg>
<div class="t" style="left:86.00px;top:187.20px;font-size:8.6px;color:#555;font-weight:normal;letter-spacing:0px;">O</div>
<div class="a" style="left:56.5px;top:202px;width:34.5px;height:14.2px;background:#efefef;"></div>
<svg class="a" style="left:58.6px;top:204.8px" width="12" height="9" viewBox="0 0 12 9"><path d="M0.2 4.2Q5.8-2.6 11.4 4.2Q5.8 11 0.2 4.2z" fill="#989898"/><circle cx="5.8" cy="4.2" r="2.4" fill="none" stroke="#c4c4c4" stroke-width="1"/><circle cx="5.8" cy="4.2" r="0.9" fill="#777"/></svg>
<svg class="a" style="left:76px;top:202px" width="14" height="14" viewBox="0 0 14 14"><path d="M6.5 1.3Q7.3 5.7 12 6.8Q7.3 7.9 6.5 12.8Q5.7 7.9 1 6.8Q5.7 5.7 6.5 1.3z" fill="#e8843a"/><circle cx="6.5" cy="6.8" r="1.5" fill="#fff"/></svg>
<div class="a" style="left:56.5px;top:220px;width:34.5px;height:14.2px;background:#efefef;"></div>
<svg class="a" style="left:58.6px;top:222.8px" width="12" height="9" viewBox="0 0 12 9"><path d="M0.2 4.2Q5.8-2.6 11.4 4.2Q5.8 11 0.2 4.2z" fill="#989898"/><circle cx="5.8" cy="4.2" r="2.4" fill="none" stroke="#c4c4c4" stroke-width="1"/><circle cx="5.8" cy="4.2" r="0.9" fill="#777"/></svg>
<svg class="a" style="left:76px;top:220px" width="14" height="14" viewBox="0 0 14 14"><rect x="4" y="1" width="9" height="9" fill="none" stroke="#666" stroke-width="1"/><path d="M1 13l8-8" stroke="#e8843a" stroke-width="1.3"/></svg>
<div class="a" style="left:56.5px;top:237.6px;width:34.5px;height:14.2px;background:#efefef;"></div>
<svg class="a" style="left:58.6px;top:240.4px" width="12" height="9" viewBox="0 0 12 9"><path d="M0.2 4.2Q5.8-2.6 11.4 4.2Q5.8 11 0.2 4.2z" fill="#989898"/><circle cx="5.8" cy="4.2" r="2.4" fill="none" stroke="#c4c4c4" stroke-width="1"/><circle cx="5.8" cy="4.2" r="0.9" fill="#777"/></svg>
<svg class="a" style="left:76px;top:237.6px" width="14" height="14" viewBox="0 0 14 14"><rect x="4" y="1" width="9" height="9" fill="none" stroke="#666" stroke-width="1"/><path d="M1 13l8-8" stroke="#e8843a" stroke-width="1.3"/></svg>
<div class="a" style="left:56.5px;top:255.3px;width:34.5px;height:14.2px;background:#efefef;"></div>
<svg class="a" style="left:58.6px;top:258.1px" width="12" height="9" viewBox="0 0 12 9"><path d="M0.2 4.2Q5.8-2.6 11.4 4.2Q5.8 11 0.2 4.2z" fill="#989898"/><circle cx="5.8" cy="4.2" r="2.4" fill="none" stroke="#c4c4c4" stroke-width="1"/><circle cx="5.8" cy="4.2" r="0.9" fill="#777"/></svg>
<svg class="a" style="left:76px;top:255.3px" width="14" height="14" viewBox="0 0 14 14"><rect x="4" y="1" width="9" height="9" fill="none" stroke="#666" stroke-width="1"/><path d="M1 13l8-8" stroke="#e8843a" stroke-width="1.3"/></svg>
<div class="a" style="left:56.5px;top:273.5px;width:34.5px;height:14.2px;background:#efefef;"></div>
<svg class="a" style="left:58.6px;top:276.3px" width="12" height="9" viewBox="0 0 12 9"><path d="M0.2 4.2Q5.8-2.6 11.4 4.2Q5.8 11 0.2 4.2z" fill="#989898"/><circle cx="5.8" cy="4.2" r="2.4" fill="none" stroke="#c4c4c4" stroke-width="1"/><circle cx="5.8" cy="4.2" r="0.9" fill="#777"/></svg>
<svg class="a" style="left:76px;top:273.5px" width="14" height="14" viewBox="0 0 14 14"><rect x="5" y="1" width="8" height="8" fill="none" stroke="#555" stroke-width="1"/><rect x="1" y="5" width="8.5" height="8.5" fill="#e8843a"/><rect x="4" y="4" width="5" height="5" fill="#f0a060" opacity="0.8"/></svg>
<div class="a" style="left:56.5px;top:291px;width:34.5px;height:14.2px;background:#efefef;"></div>
<svg class="a" style="left:58.6px;top:293.8px" width="12" height="9" viewBox="0 0 12 9"><path d="M0.2 4.2Q5.8-2.6 11.4 4.2Q5.8 11 0.2 4.2z" fill="#989898"/><circle cx="5.8" cy="4.2" r="2.4" fill="none" stroke="#c4c4c4" stroke-width="1"/><circle cx="5.8" cy="4.2" r="0.9" fill="#777"/></svg>
<svg class="a" style="left:76px;top:291px" width="14" height="14" viewBox="0 0 14 14"><rect x="5" y="1" width="8" height="8" fill="none" stroke="#555" stroke-width="1"/><rect x="1" y="5" width="8.5" height="8.5" fill="#e8843a"/><rect x="4" y="4" width="5" height="5" fill="#f0a060" opacity="0.8"/></svg>
<div class="a" style="left:56.5px;top:308.5px;width:34.5px;height:14.2px;background:#efefef;"></div>
<svg class="a" style="left:58.6px;top:311.3px" width="12" height="9" viewBox="0 0 12 9"><path d="M0.2 4.2Q5.8-2.6 11.4 4.2Q5.8 11 0.2 4.2z" fill="#989898"/><circle cx="5.8" cy="4.2" r="2.4" fill="none" stroke="#c4c4c4" stroke-width="1"/><circle cx="5.8" cy="4.2" r="0.9" fill="#777"/></svg>
<svg class="a" style="left:76px;top:308.5px" width="14" height="14" viewBox="0 0 14 14"><rect x="5" y="1" width="8" height="8" fill="none" stroke="#555" stroke-width="1"/><rect x="1" y="5" width="8.5" height="8.5" fill="#e8843a"/><rect x="4" y="4" width="5" height="5" fill="#f0a060" opacity="0.8"/></svg>
<div class="a" style="left:43.5px;top:326px;width:47.5px;height:14.4px;background:#efefef;"></div>
<svg class="a" style="left:28.5px;top:328.2px" width="10" height="10" viewBox="0 0 10 10"><defs><linearGradient id="tg" x1="0" y1="0" x2="1" y2="0"><stop offset="0" stop-color="#333"/><stop offset="1" stop-color="#b0b0b0"/></linearGradient></defs><path d="M9.3 0.6V9.2H0.6z" fill="url(#tg)" stroke="#333" stroke-width="0.7"/></svg>
<svg class="a" style="left:46.1px;top:329.0px" width="12" height="9" viewBox="0 0 12 9"><path d="M0.2 4.2Q5.8-2.6 11.4 4.2Q5.8 11 0.2 4.2z" fill="#989898"/><circle cx="5.8" cy="4.2" r="2.4" fill="none" stroke="#c4c4c4" stroke-width="1"/><circle cx="5.8" cy="4.2" r="0.9" fill="#777"/></svg>
<svg class="a" style="left:64px;top:328.2px" width="12" height="10" viewBox="0 0 12 10"><path d="M0.5 1.5h4l1 1.2h6v7H0.5z" fill="#8a8a8a"/><path d="M0.5 3.5h11v6H0.5z" fill="#9a9a9a"/></svg>
<div class="t" style="left:86.00px;top:329.00px;font-size:8.6px;color:#555;font-weight:normal;letter-spacing:0px;">S</div>
<div class="a" style="left:56.5px;top:344px;width:34.5px;height:14.2px;background:#efefef;"></div>
<svg class="a" style="left:58.6px;top:346.8px" width="12" height="9" viewBox="0 0 12 9"><path d="M0.2 4.2Q5.8-2.6 11.4 4.2Q5.8 11 0.2 4.2z" fill="#989898"/><circle cx="5.8" cy="4.2" r="2.4" fill="none" stroke="#c4c4c4" stroke-width="1"/><circle cx="5.8" cy="4.2" r="0.9" fill="#777"/></svg>
<svg class="a" style="left:76px;top:344px" width="14" height="14" viewBox="0 0 14 14"><rect x="2" y="2" width="9" height="9" fill="none" stroke="#777" stroke-width="0.9" stroke-dasharray="1.5 1"/><rect x="1" y="1" width="2" height="2" fill="#3a8ae0"/><rect x="10" y="1" width="2" height="2" fill="#3a8ae0"/><rect x="1" y="10" width="2" height="2" fill="#3a8ae0"/><path d="M9 12l4-4" stroke="#f0b020" stroke-width="2"/><circle cx="13" cy="6.5" r="1" fill="#e84a4a"/></svg>
<div class="a" style="left:3px;top:490.5px;width:100px;height:18.5px;background:#f2f2f2;border:1px solid #dedede"></div>
<div class="t" style="left:21.70px;top:495.00px;font-size:8.8px;color:#777;font-weight:normal;letter-spacing:0px;transform:scaleX(0.815);transform-origin:0 0;">COMMENTS</div>
<div class="a" style="left:0px;top:511.8px;width:768px;height:1.8px;background:#d4d4d4;"></div>
<div class="a" style="left:0px;top:513.6px;width:768px;height:35px;background:#f2f2f2;"></div>
<div class="a" style="left:0px;top:548.6px;width:768px;height:1px;background:#d4d4d4;"></div>
<div class="a" style="left:0px;top:549.6px;width:768px;height:18px;background:#f2f2f2;"></div>
<div class="a" style="left:0px;top:567.5px;width:768px;height:4.5px;background:#fff;"></div>
<div class="a" style="left:239.6px;top:567.8px;width:528.4px;height:4.2px;background:#000;"></div>
<div class="a" style="left:236.5px;top:567.8px;width:3px;height:4.2px;background:#888;"></div>
<div class="a" style="left:0px;top:570.4px;width:88px;height:1.6px;background:#000;"></div>
<div class="a" style="left:1px;top:549px;width:89.5px;height:17.5px;border:1px solid #dcdcdc;background:#f2f2f2"></div>
<svg class="a" style="left:7.5px;top:525px" width="11" height="12" viewBox="0 0 11 12"><rect x="0.5" y="0.5" width="2" height="11" fill="#444"/><path d="M10.5 0.5v11L3 6z" fill="#444"/></svg>
<svg class="a" style="left:26px;top:525.5px" width="10" height="11" viewBox="0 0 10 11"><path d="M7 0.5v10L0.5 5.5z" fill="#444"/><rect x="7.5" y="3" width="2" height="5" fill="#444"/></svg>
<svg class="a" style="left:45px;top:525px" width="9" height="12" viewBox="0 0 9 12"><path d="M0.5 0.5v11L8.5 6z" fill="#444"/></svg>
<svg class="a" style="left:62.5px;top:525.5px" width="10" height="11" viewBox="0 0 10 11"><path d="M2.5 0.5v10L9.5 5.5z" fill="#444"/><rect x="0" y="3" width="2" height="5" fill="#444"/></svg>
<svg class="a" style="left:82px;top:525px" width="10" height="12" viewBox="0 0 10 12"><path d="M0.5 0.5v11L8 6z" fill="#444"/><rect x="7.5" y="0.5" width="2" height="11" fill="#444"/></svg>
<svg class="a" style="left:747.5px;top:525px" width="13" height="13" viewBox="0 0 13 13"><circle cx="6.5" cy="6.5" r="3.7" fill="none" stroke="#9a9a9a" stroke-width="2.4"/><path d="M6.5 0.5v12M0.5 6.5h12M2.3 2.3l8.4 8.4M10.7 2.3l-8.4 8.4" stroke="#9a9a9a" stroke-width="1.8"/><circle cx="6.5" cy="6.5" r="1.8" fill="#f0f0f0"/></svg>
<svg class="a" style="left:4.5px;top:554.5px" width="7" height="7" viewBox="0 0 7 7"><circle cx="3.5" cy="3.5" r="3.3" fill="#333"/><path d="M3.5 1.5v4M1.5 3.5h4" stroke="#eee" stroke-width="0.9"/></svg>
<div class="t" style="left:19.30px;top:553.05px;font-size:8.7px;color:#777;font-weight:normal;letter-spacing:0px;transform:scaleX(0.84);transform-origin:0 0;">TEXT COMMANDS</div>
<div class="a" style="left:91px;top:105px;width:146px;height:467px;background:#fff;border-left:1px solid #b0b0b0;border-right:1px solid #a8a8a8;box-shadow:1px 0 2px rgba(0,0,0,0.15)"></div>
<svg class="a" style="left:94.5px;top:110.0px" width="13" height="13" viewBox="0 0 13 13"><path d="M0.5 6.5H6V11.1H0.5z" fill="#e2e2e2" stroke="#8a8a8a" stroke-width="0.8"/><path d="M6 6.5H11.2V11.1H6z" fill="#e2e2e2" stroke="#8a8a8a" stroke-width="0.8"/><path d="M0.5 2.8L1.7 1.6H7.2L6 2.8z" fill="#8ecaf4"/><path d="M0.5 2.8H6V6.5H0.5z" fill="#5aa6e6"/><path d="M6 2.8L7.2 1.6V5.3L6 6.5z" fill="#3a86c8"/><circle cx="9.7" cy="3.2" r="1.68" fill="#f8a818"/><path d="M12.60 3.20L10.91 3.70L10.91 2.70z" fill="#f8a818"/><path d="M11.34 4.84L10.20 4.41L10.91 3.70z" fill="#f8a818"/><path d="M9.70 6.10L9.20 4.41L10.20 4.41z" fill="#f8a818"/><path d="M8.06 4.84L8.49 3.70L9.20 4.41z" fill="#f8a818"/><path d="M6.80 3.20L8.49 2.70L8.49 3.70z" fill="#f8a818"/><path d="M8.06 1.56L9.20 1.99L8.49 2.70z" fill="#f8a818"/><path d="M9.70 0.30L10.20 1.99L9.20 1.99z" fill="#f8a818"/><path d="M11.34 1.56L10.91 2.70L10.20 1.99z" fill="#f8a818"/></svg>
<div class="t" style="left:109.60px;top:111.85px;font-size:8.5px;color:#505050;font-weight:normal;letter-spacing:-0.22px;">New Component</div>
<svg class="a" style="left:94.5px;top:127.72px" width="13" height="13" viewBox="0 0 13 13"><path d="M0.8 0.76H10.9M0.8 0.76V10.36M0.8 10.36H5" stroke="#9a9a9a" stroke-width="0.9"/><path d="M10.9 0.76V4" stroke="#9a9a9a" stroke-width="0.9"/><rect x="0" y="0" width="1.6" height="1.6" fill="#444"/><rect x="10.1" y="0" width="1.6" height="1.6" fill="#444"/><rect x="0" y="9.6" width="1.6" height="1.6" fill="#444"/><path d="M6.2 8.96H12M9.1 6.06V11.86" stroke="#25b050" stroke-width="1.9"/></svg>
<div class="t" style="left:109.60px;top:129.57px;font-size:8.5px;color:#505050;font-weight:normal;letter-spacing:-0.22px;">Create Sketch</div>
<svg class="a" style="left:94.5px;top:145.44px" width="13" height="13" viewBox="0 0 13 13"><path d="M0.3 6Q0.3 1.2 5 0.6Q8.5 0.5 9.5 2.5L11.2 6Q11.5 11.5 6 11.5H3Q0.3 11.3 0.3 8z" fill="#9468d8"/><path d="M2 4Q4 2 7 2.5" stroke="#b898ec" stroke-width="1" fill="none"/><path d="M6 7.5Q8 9 10 7.5" stroke="#7a50c0" stroke-width="0.8" fill="none"/><circle cx="8.8" cy="2.8" r="1.68" fill="#f8a818"/><path d="M11.70 2.80L10.01 3.30L10.01 2.30z" fill="#f8a818"/><path d="M10.44 4.44L9.30 4.01L10.01 3.30z" fill="#f8a818"/><path d="M8.80 5.70L8.30 4.01L9.30 4.01z" fill="#f8a818"/><path d="M7.16 4.44L7.59 3.30L8.30 4.01z" fill="#f8a818"/><path d="M5.90 2.80L7.59 2.30L7.59 3.30z" fill="#f8a818"/><path d="M7.16 1.16L8.30 1.59L7.59 2.30z" fill="#f8a818"/><path d="M8.80 -0.10L9.30 1.59L8.30 1.59z" fill="#f8a818"/><path d="M10.44 1.16L10.01 2.30L9.30 1.59z" fill="#f8a818"/></svg>
<div class="t" style="left:109.60px;top:147.29px;font-size:8.5px;color:#505050;font-weight:normal;letter-spacing:-0.22px;">Create Form</div>
<svg class="a" style="left:94.5px;top:163.16px" width="13" height="13" viewBox="0 0 13 13"><path d="M3.2 3Q3.2 1 5.2 1H9.3Q11.3 1 11.3 3V8.1Q11.3 10.1 9.3 10.1H6" fill="#f4f4f4" stroke="#555" stroke-width="0.9"/><path d="M5.5 3.5V1" stroke="#888" stroke-width="0.6"/><path d="M2.5 6H5.6M4.4 4.4L6.5 6L4.4 7.6z" fill="#222" stroke="#222" stroke-width="1"/><rect x="2.6" y="9" width="1.4" height="1.4" fill="#666"/><rect x="4.6" y="9" width="1.4" height="1.4" fill="#666"/></svg>
<div class="t" style="left:109.60px;top:165.01px;font-size:8.5px;color:#505050;font-weight:normal;letter-spacing:-0.22px;">Derive</div>
<div class="a" style="left:95px;top:177.26px;width:138px;height:1.8px;background:#c9c9c9;"></div>
<svg class="a" style="left:94.5px;top:181.38px" width="13" height="13" viewBox="0 0 13 13"><path d="M0.5 2.8L2.2 1H9.2L7.5 2.8z" fill="#8ecaf4"/><path d="M0.5 2.8H7.5V9.8H0.5z" fill="#5aa6e6"/><path d="M7.5 2.8L9.2 1V8L7.5 9.8z" fill="#3a86c8"/><path d="M0.5 9.8H7.5V11.2H0.5z" fill="#c8c8c8"/><path d="M11 11V1.5" stroke="#333" stroke-width="0.8"/><path d="M10 2.8L11 0.8L12 2.8z" fill="#333"/></svg>
<div class="t" style="left:109.60px;top:183.23px;font-size:8.5px;color:#505050;font-weight:normal;letter-spacing:-0.22px;">Extrude</div>
<div class="t" style="left:209.30px;top:183.23px;font-size:8.5px;color:#5a5a5a;font-weight:normal;letter-spacing:0px;transform:scaleX(0.68);transform-origin:0 0;">E</div>
<svg class="a" style="left:94.5px;top:199.1px" width="13" height="13" viewBox="0 0 13 13"><path d="M1.5 3.2Q6 0 11.5 3" fill="none" stroke="#444" stroke-width="0.8"/><path d="M0.5 6.5Q6 3 11 6.5L12.2 5.3Q6 1.5 1.6 5z" fill="#8ecaf4"/><path d="M0.5 6.5Q6 3 11 6.5V10.3Q6 6.8 0.5 10z" fill="#5aa6e6"/><path d="M11 6.5L12.2 5.3V9.1L11 10.3z" fill="#fff" stroke="#555" stroke-width="0.6"/></svg>
<div class="t" style="left:109.60px;top:200.95px;font-size:8.5px;color:#505050;font-weight:normal;letter-spacing:-0.22px;">Revolve</div>
<svg class="a" style="left:94.5px;top:216.82px" width="13" height="13" viewBox="0 0 13 13"><path d="M0.5 4Q0.5 1.5 3 1.5H5L6 2.5H11.5V8H0.5z" fill="#5aa6e6"/><path d="M0.5 4H11.5V5H0.5z" fill="#8ecaf4"/><rect x="4" y="6.8" width="5.2" height="4.6" fill="#fff" stroke="#666" stroke-width="0.9"/></svg>
<div class="t" style="left:109.60px;top:218.67px;font-size:8.5px;color:#505050;font-weight:normal;letter-spacing:-0.22px;">Sweep</div>
<svg class="a" style="left:94.5px;top:234.54px" width="13" height="13" viewBox="0 0 13 13"><path d="M0.5 1L6 2.5L11.5 1V7.5L6 9.5L0.5 7.5z" fill="#5aa6e6"/><path d="M0.5 1L6 2.5L11.5 1" fill="none" stroke="#8ecaf4" stroke-width="0.8"/><circle cx="5.2" cy="9.3" r="2.3" fill="#fff" stroke="#666" stroke-width="0.9"/></svg>
<div class="t" style="left:109.60px;top:236.39px;font-size:8.5px;color:#505050;font-weight:normal;letter-spacing:-0.22px;">Loft</div>
<svg class="a" style="left:94.5px;top:252.26px" width="13" height="13" viewBox="0 0 13 13"><path d="M1.5 11V3.5Q7 5 10 11z" fill="#7ab8ea"/><path d="M1.5 11V3.5L0.8 2.5M1.5 11H11" fill="none" stroke="#8a8a8a" stroke-width="0.8"/><path d="M3.5 2Q7 3.2 9 6.5" fill="none" stroke="#aaa" stroke-width="0.6"/></svg>
<div class="t" style="left:109.60px;top:254.11px;font-size:8.5px;color:#505050;font-weight:normal;letter-spacing:-0.22px;">Rib</div>
<svg class="a" style="left:94.5px;top:269.98px" width="13" height="13" viewBox="0 0 13 13"><rect x="0.5" y="0.5" width="11" height="11" rx="1.5" fill="#8a8a8a"/><rect x="2" y="2" width="8" height="8" fill="#cfcfcf"/><circle cx="6" cy="6" r="2.9" fill="#4a9ae0"/><path d="M2.5 2.5L4 4M9.5 2.5L8 4M2.5 9.5L4 8M9.5 9.5L8 8" stroke="#eee" stroke-width="0.9"/></svg>
<div class="t" style="left:109.60px;top:271.83px;font-size:8.5px;color:#505050;font-weight:normal;letter-spacing:-0.22px;">Web</div>
<div class="a" style="left:95px;top:284.08px;width:138px;height:1.8px;background:#c9c9c9;"></div>
<svg class="a" style="left:94.5px;top:288.2px" width="13" height="13" viewBox="0 0 13 13"><rect x="0.5" y="0.5" width="11" height="11" rx="2" fill="#e4e4e4" stroke="#7a7a7a" stroke-width="1"/><circle cx="6" cy="6" r="3.6" fill="#4a9ae0" stroke="#7a7a7a" stroke-width="0.8"/><path d="M3.8 4.2L8 7.6" stroke="#fff" stroke-width="1"/></svg>
<div class="t" style="left:109.60px;top:290.05px;font-size:8.5px;color:#505050;font-weight:normal;letter-spacing:-0.22px;">Hole</div>
<div class="t" style="left:209.20px;top:290.05px;font-size:8.5px;color:#5a5a5a;font-weight:normal;letter-spacing:0px;transform:scaleX(0.68);transform-origin:0 0;">H</div>
<svg class="a" style="left:94.5px;top:305.92px" width="13" height="13" viewBox="0 0 13 13"><rect x="2.5" y="0.8" width="7" height="10.4" rx="1" fill="#fff" stroke="#8a8a8a" stroke-width="0.8"/><path d="M0.5 4.3L11.5 2.8M0.5 6.8L11.5 5.3M0.5 9.3L11.5 7.8" stroke="#4aa0e6" stroke-width="1.1"/></svg>
<div class="t" style="left:109.60px;top:307.77px;font-size:8.5px;color:#505050;font-weight:normal;letter-spacing:-0.22px;">Thread</div>
<div class="a" style="left:95px;top:320.02px;width:138px;height:1.8px;background:#c9c9c9;"></div>
<svg class="a" style="left:94.5px;top:324.14px" width="13" height="13" viewBox="0 0 13 13"><path d="M0.5 3.5L3 1H11.5L9 3.5z" fill="#8ecaf4"/><path d="M0.5 3.5H9V12H0.5z" fill="#5aa6e6"/><path d="M9 3.5L11.5 1V9.5L9 12z" fill="#3a86c8"/></svg>
<div class="t" style="left:109.60px;top:325.99px;font-size:8.5px;color:#505050;font-weight:normal;letter-spacing:-0.22px;">Box</div>
<svg class="a" style="left:94.5px;top:341.86px" width="13" height="13" viewBox="0 0 13 13"><path d="M0.5 2.5V10Q6 12.5 11.5 10V2.5z" fill="#5aa6e6"/><ellipse cx="6" cy="2.5" rx="5.5" ry="2" fill="#8ecaf4"/></svg>
<div class="t" style="left:109.60px;top:343.71px;font-size:8.5px;color:#505050;font-weight:normal;letter-spacing:-0.22px;">Cylinder</div>
<svg class="a" style="left:94.5px;top:359.58px" width="13" height="13" viewBox="0 0 13 13"><circle cx="6" cy="6" r="5.8" fill="#6ab4ec"/><path d="M0.3 6.5Q6 9.5 11.7 6.5Q11 11.8 6 11.8T0.3 6.5z" fill="#3a8ad0" opacity="0.45"/></svg>
<div class="t" style="left:109.60px;top:361.43px;font-size:8.5px;color:#505050;font-weight:normal;letter-spacing:-0.22px;">Sphere</div>
<svg class="a" style="left:94.5px;top:377.3px" width="13" height="13" viewBox="0 0 13 13"><ellipse cx="6" cy="6.2" rx="5.8" ry="4" fill="#6ab4ec"/><ellipse cx="6" cy="6.6" rx="5" ry="3" fill="none" stroke="#4a9ad8" stroke-width="0.6"/><ellipse cx="6" cy="5.9" rx="1.7" ry="0.8" fill="#fff"/></svg>
<div class="t" style="left:109.60px;top:379.15px;font-size:8.5px;color:#505050;font-weight:normal;letter-spacing:-0.22px;">Torus</div>
<svg class="a" style="left:94.5px;top:395.02px" width="13" height="13" viewBox="0 0 13 13"><path d="M2.5 1.5L9.5 3L2.5 5.5L9.5 7.5L2.5 10.5" fill="none" stroke="#3a8ad8" stroke-width="2"/></svg>
<div class="t" style="left:109.60px;top:396.87px;font-size:8.5px;color:#505050;font-weight:normal;letter-spacing:-0.22px;">Coil</div>
<svg class="a" style="left:94.5px;top:412.74px" width="13" height="13" viewBox="0 0 13 13"><path d="M1.2 8.6Q0.6 6.8 2.5 6L9 3.6Q11.2 3 11.6 4.6Q11.9 6.2 10 6.9L3.5 9.5Q1.8 10.2 1.2 8.6z" fill="#4a9ad8"/><path d="M2.5 6L9 3.6Q11 3.2 11.4 4.2L3 7.4z" fill="#7ab8ea"/></svg>
<div class="t" style="left:109.60px;top:414.59px;font-size:8.5px;color:#505050;font-weight:normal;letter-spacing:-0.22px;">Pipe</div>
<div class="a" style="left:95px;top:426.84px;width:138px;height:1.8px;background:#c9c9c9;"></div>
<div class="t" style="left:109.60px;top:432.81px;font-size:8.5px;color:#505050;font-weight:normal;letter-spacing:-0.22px;">Pattern</div>
<svg class="a" style="left:224.8px;top:433.36000000000024px" width="6" height="8" viewBox="0 0 6 8"><path d="M0.3 0.2L4.6 3.6 0.3 7z" fill="#333"/></svg>
<svg class="a" style="left:94.5px;top:448.68px" width="13" height="13" viewBox="0 0 13 13"><path d="M5.2 1L1 11H5.2z" fill="#fff" stroke="#555" stroke-width="0.8"/><path d="M6.6 1L11.4 11H6.6z" fill="#4a9ad8"/></svg>
<div class="t" style="left:109.60px;top:450.53px;font-size:8.5px;color:#505050;font-weight:normal;letter-spacing:-0.22px;">Mirror</div>
<div class="a" style="left:95px;top:462.78px;width:138px;height:1.8px;background:#c9c9c9;"></div>
<svg class="a" style="left:94.5px;top:466.9px" width="13" height="13" viewBox="0 0 13 13"><path d="M0.5 7.5L6.5 3L11.5 5.5V7.5L5.5 11.5L0.5 9.5z" fill="#3a8ad8"/><path d="M0.5 6L6.5 1.5L11.5 3.8L5.5 8.5z" fill="#eaeaea" stroke="#7a7a7a" stroke-width="0.7"/></svg>
<div class="t" style="left:109.60px;top:468.75px;font-size:8.5px;color:#505050;font-weight:normal;letter-spacing:-0.22px;">Thicken</div>
<svg class="a" style="left:94.5px;top:484.62px" width="13" height="13" viewBox="0 0 13 13"><rect x="4.5" y="0.5" width="7.5" height="7.5" fill="#e8884a"/><circle cx="5" cy="7" r="4.7" fill="#e8884a"/><path d="M5 2.3V7H9.7A4.7 4.7 0 0 0 5 2.3z" fill="#6ab4ec"/></svg>
<div class="t" style="left:109.60px;top:486.47px;font-size:8.5px;color:#505050;font-weight:normal;letter-spacing:-0.22px;">Boundary Fill</div>
<div class="a" style="left:95px;top:498.72px;width:138px;height:1.8px;background:#c9c9c9;"></div>
<svg class="a" style="left:94.5px;top:502.84px" width="13" height="13" viewBox="0 0 13 13"><ellipse cx="5.5" cy="4" rx="5" ry="2" fill="#e0c070"/><path d="M0.5 4V10Q5.5 13 10.5 10V4Q5.5 7 0.5 4z" fill="#c8a850"/><path d="M0.5 7Q5.5 10 10.5 7M3 5.5V11.5M7 5.5V11.5" stroke="#a88830" fill="none" stroke-width="0.5"/><circle cx="9.6" cy="2.8" r="1.68" fill="#f8a818"/><path d="M12.50 2.80L10.81 3.30L10.81 2.30z" fill="#f8a818"/><path d="M11.24 4.44L10.10 4.01L10.81 3.30z" fill="#f8a818"/><path d="M9.60 5.70L9.10 4.01L10.10 4.01z" fill="#f8a818"/><path d="M7.96 4.44L8.39 3.30L9.10 4.01z" fill="#f8a818"/><path d="M6.70 2.80L8.39 2.30L8.39 3.30z" fill="#f8a818"/><path d="M7.96 1.16L9.10 1.59L8.39 2.30z" fill="#f8a818"/><path d="M9.60 -0.10L10.10 1.59L9.10 1.59z" fill="#f8a818"/><path d="M11.24 1.16L10.81 2.30L10.10 1.59z" fill="#f8a818"/></svg>
<div class="t" style="left:109.60px;top:504.69px;font-size:8.5px;color:#505050;font-weight:normal;letter-spacing:-0.22px;">Create Mesh</div>
<svg class="a" style="left:94.5px;top:520.56px" width="13" height="13" viewBox="0 0 13 13"><path d="M1.5 2.5H12L10 7.5H-0.5z" fill="#e8884a"/><ellipse cx="5.8" cy="5" rx="2.6" ry="1.2" fill="#8ecaf4" stroke="#4a9ad8" stroke-width="0.5"/><path d="M3.5 7.5H8V10Q5.75 11.5 3.5 10z" fill="#c8a850"/></svg>
<div class="t" style="left:109.60px;top:522.41px;font-size:8.5px;color:#505050;font-weight:normal;letter-spacing:-0.22px;">Create Mesh Section Sketch</div>
<div class="a" style="left:95px;top:534.66px;width:138px;height:1.8px;background:#c9c9c9;"></div>
<svg class="a" style="left:94.5px;top:538.78px" width="13" height="13" viewBox="0 0 13 13"><path d="M0.8 3.8L3.6 1H9.5L11.2 3V8.6L8.4 11.4H0.8z" fill="#f2f2f2" stroke="#7a7a7a" stroke-width="0.9"/><circle cx="9.5" cy="2.8" r="1.68" fill="#f8a818"/><path d="M12.40 2.80L10.71 3.30L10.71 2.30z" fill="#f8a818"/><path d="M11.14 4.44L10.00 4.01L10.71 3.30z" fill="#f8a818"/><path d="M9.50 5.70L9.00 4.01L10.00 4.01z" fill="#f8a818"/><path d="M7.86 4.44L8.29 3.30L9.00 4.01z" fill="#f8a818"/><path d="M6.60 2.80L8.29 2.30L8.29 3.30z" fill="#f8a818"/><path d="M7.86 1.16L9.00 1.59L8.29 2.30z" fill="#f8a818"/><path d="M9.50 -0.10L10.00 1.59L9.00 1.59z" fill="#f8a818"/><path d="M11.14 1.16L10.71 2.30L10.00 1.59z" fill="#f8a818"/></svg>
<div class="t" style="left:109.60px;top:540.63px;font-size:8.5px;color:#505050;font-weight:normal;letter-spacing:-0.22px;">Create Base Feature</div>
<div class="a" style="left:95px;top:553.7px;width:138.5px;height:17.6px;background:#d9d9d9;"></div>
<svg class="a" style="left:221px;top:557.0000000000005px" width="6" height="12" viewBox="0 0 6 12"><circle cx="3" cy="1.5" r="1.2" fill="#333"/><circle cx="3" cy="5.5" r="1.2" fill="#333"/><circle cx="3" cy="9.5" r="1.2" fill="#333"/></svg>
<svg class="a" style="left:94.5px;top:556.5px" width="13" height="13" viewBox="0 0 13 13"><path d="M0.3 11.5V6.3L2.5 4.3H6.5L7.5 5.5H11.7V11.5z" fill="#3aa85a"/><path d="M0.3 6.3L2.5 4.3H6.5L7.5 5.5H11.7V6.8H0.3z" fill="#6ac880"/><circle cx="8.8" cy="10" r="1" fill="#222"/><circle cx="2.2" cy="10" r="0.7" fill="#222"/><circle cx="8.6" cy="2.8" r="1.68" fill="#f8a818"/><path d="M11.50 2.80L9.81 3.30L9.81 2.30z" fill="#f8a818"/><path d="M10.24 4.44L9.10 4.01L9.81 3.30z" fill="#f8a818"/><path d="M8.60 5.70L8.10 4.01L9.10 4.01z" fill="#f8a818"/><path d="M6.96 4.44L7.39 3.30L8.10 4.01z" fill="#f8a818"/><path d="M5.70 2.80L7.39 2.30L7.39 3.30z" fill="#f8a818"/><path d="M6.96 1.16L8.10 1.59L7.39 2.30z" fill="#f8a818"/><path d="M8.60 -0.10L9.10 1.59L8.10 1.59z" fill="#f8a818"/><path d="M10.24 1.16L9.81 2.30L9.10 1.59z" fill="#f8a818"/></svg>
<div class="t" style="left:109.60px;top:558.35px;font-size:8.5px;color:#505050;font-weight:normal;letter-spacing:-0.22px;">Create 3D PCB</div>
</body></html>
